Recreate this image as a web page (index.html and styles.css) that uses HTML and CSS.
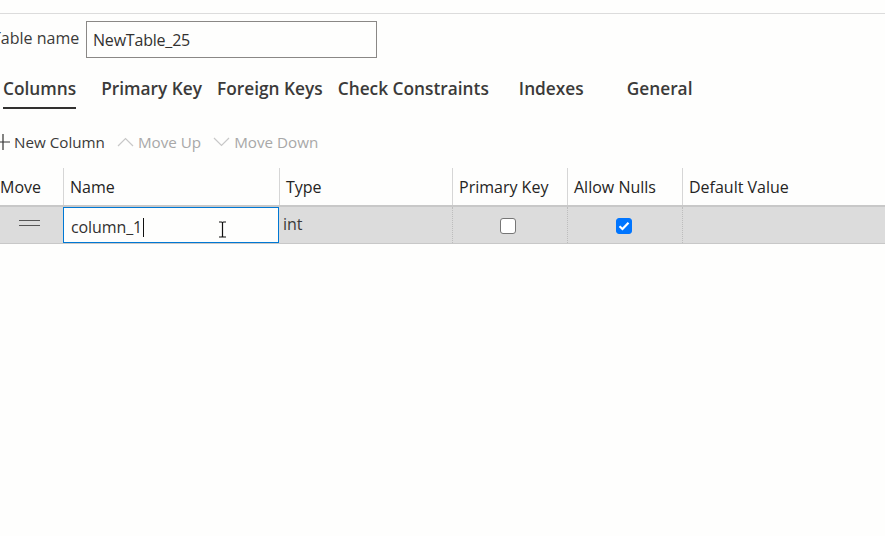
FILE: index.html
```
<!DOCTYPE html>
<html>
<head>
<meta charset="utf-8">
<link rel="stylesheet" href="styles.css">
</head>
<body>
<div class="page">
  <div class="topline"></div>
  <div class="name-row">
    <span class="name-label">Table name</span>
    <div class="name-input">NewTable_25</div>
  </div>
  <div class="tabs">
    <span class="tab active">Columns</span>
    <span class="tab">Primary Key</span>
    <span class="tab">Foreign Keys</span>
    <span class="tab">Check Constraints</span>
    <span class="tab wide">Indexes</span>
    <span class="tab">General</span>
  </div>
  <div class="toolbar">
    <span class="tool enabled">
      <svg class="ico plus" width="14" height="16" viewBox="0 0 14 16"><path d="M7 0V16M0 8H14" stroke="#333" stroke-width="1.2" fill="none"/></svg>
      New Column
    </span>
    <span class="tool disabled">
      <svg class="ico" width="17" height="10" viewBox="0 0 17 10"><path d="M1 9L8.5 1.5L16 9" stroke="#c8c8c8" stroke-width="1.2" fill="none"/></svg>
      Move Up
    </span>
    <span class="tool disabled">
      <svg class="ico" width="17" height="10" viewBox="0 0 17 10"><path d="M1 1L8.5 8.5L16 1" stroke="#c8c8c8" stroke-width="1.2" fill="none"/></svg>
      Move Down
    </span>
  </div>
  <div class="grid">
    <div class="hrow">
      <div class="hcell c-move">Move</div>
      <div class="hcell c-name">Name</div>
      <div class="hcell c-type">Type</div>
      <div class="hcell c-pk">Primary Key</div>
      <div class="hcell c-an">Allow Nulls</div>
      <div class="hcell c-def">Default Value</div>
    </div>
    <div class="drow">
      <div class="dcell c-move"><span class="handle"></span></div>
      <div class="dcell c-name">
        <div class="edit">column_1<span class="caret"></span>
          <svg class="ibeam" width="9" height="17" viewBox="0 0 9 17"><path d="M1 1H3.5Q4.5 1 4.5 2V15Q4.5 16 3.5 16H1M8 1H5.5Q4.5 1 4.5 2V15Q4.5 16 5.5 16H8" stroke="#111" stroke-width="1.2" fill="none"/></svg>
        </div>
      </div>
      <div class="dcell c-type">int</div>
      <div class="dcell c-pk center"><span class="cb"></span></div>
      <div class="dcell c-an center"><span class="cb checked"><svg width="12" height="10" viewBox="0 0 12 10"><path d="M1.5 5.2L4.5 8L10.5 1.8" stroke="#fff" stroke-width="2.2" fill="none"/></svg></span></div>
      <div class="dcell c-def"></div>
    </div>
  </div>
</div>
</body>
</html>
```
FILE: styles.css
```
html, body {
  margin: 0;
  padding: 0;
  background: #fefefd;
}
body {
  font-family: "Open Sans", "Noto Sans", sans-serif;
  color: #323130;
  width: 885px;
  height: 536px;
  overflow: hidden;
}
.page {
  margin-left: -8px;
}
.topline {
  height: 13px;
  border-bottom: 1px solid #dcdcdc;
  margin-left: 8px;
}
.name-row {
  display: flex;
  align-items: center;
  margin-top: 7px;
  height: 37px;
}
.name-label {
  font-size: 16px;
  color: #3b3a39;
  width: 94px;
  white-space: nowrap;
  padding-bottom: 3px;
}
.name-input {
  box-sizing: border-box;
  width: 291px;
  height: 37px;
  border: 1px solid #8a8886;
  padding: 7px 0 0 6px;
  font-size: 16px;
  color: #323130;
  letter-spacing: -0.2px;
}
.tabs {
  display: flex;
  margin-top: 19px;
  margin-left: 11px;
  height: 35px;
}
.tab {
  font-size: 17.3px;
  font-weight: 600;
  color: #3b3a39;
  margin-right: 15px;
  line-height: 24px;
  height: 30px;
  white-space: nowrap;
}
.tab.active {
  border-bottom: 2px solid #323130;
  margin-right: 25px;
}
.tab.wide {
  margin-right: 43px;
  margin-left: 15px;
}
.toolbar {
  display: flex;
  align-items: center;
  margin-top: 20px;
  height: 20px;
  font-size: 15.2px;
}
.tool {
  display: flex;
  align-items: center;
  margin-right: 12px;
  white-space: nowrap;
}
.tool .ico {
  margin-right: 4px;
}
.tool.enabled {
  color: #3b3a39;
  margin-left: 4px;
}
.tool.disabled {
  color: #a8a8a8;
}
.grid {
  margin-top: 16px;
}
.hrow, .drow {
  display: grid;
  grid-template-columns: 71px 216px 173px 115px 115px 1fr;
}
.hrow {
  height: 37px;
  border-bottom: 2px solid #c8c8c8;
}
.hcell {
  font-size: 16px;
  color: #252423;
  padding: 8px 0 0 6px;
  border-left: 1px solid #d6d6d6;
  white-space: nowrap;
}
.hcell.c-move {
  border-left: none;
  padding-left: 8px;
}
.drow {
  height: 36px;
  background: #dcdcdc;
  border-bottom: 1px solid #c8c8c8;
}
.dcell {
  border-left: 1px dotted #bdbdbd;
  display: flex;
  align-items: center;
  font-size: 16px;
  color: #3b3a39;
  position: relative;
}
.dcell.c-move {
  border-left: none;
  justify-content: center;
  padding-left: 8px;
}
.dcell.c-type {
  padding-left: 4px;
  border-left: none;
  padding-bottom: 3px;
}
.dcell.c-name {
  border-left: none;
}
.center {
  justify-content: center;
}
.handle {
  width: 21px;
  height: 4px;
  border-top: 1px solid #555;
  border-bottom: 1px solid #555;
  margin-bottom: 4px;
  margin-right: 4px;
}
.edit {
  box-sizing: border-box;
  width: 100%;
  height: 100%;
  border: 1.5px solid #0078d4;
  background: #fefefd;
  padding: 8px 0 0 7px;
  font-size: 16px;
  color: #323130;
  position: relative;
  letter-spacing: -0.1px;
}
.caret {
  display: inline-block;
  width: 1px;
  height: 19px;
  background: #111;
  vertical-align: -4px;
  margin-left: 1px;
}
.ibeam {
  position: absolute;
  left: 154px;
  top: 13px;
}
.cb {
  box-sizing: border-box;
  width: 16px;
  height: 16px;
  border: 1.5px solid #767676;
  border-radius: 3px;
  background: #fff;
  display: flex;
  align-items: center;
  justify-content: center;
  margin-top: 2px;
}
.cb.checked {
  background: #0075ff;
  border-color: #0075ff;
}
.dcell.c-pk .cb { margin-right: 5px; }
.dcell.c-an .cb { margin-right: 2px; }
```
